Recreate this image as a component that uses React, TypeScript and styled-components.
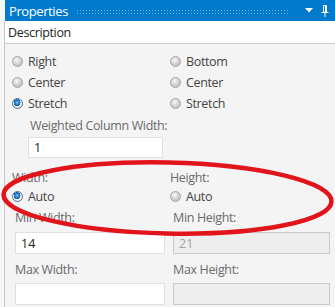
import styled, { createGlobalStyle } from "styled-components";

const GlobalStyle = createGlobalStyle`
    html, body {
        margin: 0;
        padding: 0;
        background: #f7f7f7;
    }
    body {
        font-family: "Open Sans", "Noto Sans", sans-serif;
        font-size: 12.5px;
    }
`;

const Frame = styled.div`
    position: relative;
    width: 335px;
    height: 307px;
    overflow: hidden;
    padding-left: 4px;
    box-sizing: border-box;
    background: #f7f7f7;
`;

const TitleBar = styled.div`
    height: 21px;
    margin-left: 1px;
    background: #007acc;
    display: flex;
    align-items: center;
    padding: 0 6px 0 4px;
    color: #ffffff;
`;

const Title = styled.span`
    font-size: 13px;
    letter-spacing: -0.4px;
`;

// dotted grip between title and the buttons
const Grip = styled.div`
    flex: 1;
    height: 5px;
    margin: 1px 8px 0 8px;
    background-image: radial-gradient(circle, rgba(255, 255, 255, 0.45) 0.6px, transparent 0.9px);
    background-size: 3px 3px;
`;

const TitleButton = styled.span`
    display: flex;
    align-items: center;
    margin-left: 8px;
`;

const Body = styled.div`
    border-left: 1px solid #c8c8c8;
    background: #f4f4f4;
    height: 286px;
`;

const DescriptionBar = styled.div`
    height: 22px;
    background: #ffffff;
    border-bottom: 1px solid #cccccc;
    display: flex;
    align-items: center;
    padding-left: 3px;
    color: #222;
    letter-spacing: -0.35px;
`;

const Content = styled.div`
    padding-top: 7px;
`;

const TwoColumns = styled.div<{ $top?: number }>`
    display: grid;
    grid-template-columns: 158px 1fr;
    padding: 0 5px 0 7px;
    margin-top: ${(p) => p.$top ?? 0}px;
`;

const Column = styled.div`
    display: flex;
    flex-direction: column;
`;

const RadioRow = styled.div`
    height: 21px;
    display: flex;
    align-items: center;
    gap: 5px;
    color: #444;
    letter-spacing: -0.35px;
`;

const Radio = styled.span<{ $checked?: boolean }>`
    width: 11px;
    height: 11px;
    border-radius: 50%;
    box-sizing: border-box;
    flex: none;
    border: 1px solid ${(p) => (p.$checked ? "#4d6f8f" : "#a4a4a4")};
    background: ${(p) =>
        p.$checked
            ? "radial-gradient(circle at 45% 40%, #8fd0ff 0, #2f8be0 1.6px, #1d5f9e 3.3px, #ffffff 3.6px, #e6e6e6 5px)"
            : "radial-gradient(circle at 40% 35%, #fafafa 0, #e4e4e4 2px, #c8c8c8 5px)"};
`;

const Label = styled.div<{ $indent?: number; $top?: number }>`
    height: 16px;
    line-height: 16px;
    color: #6a6a6a;
    letter-spacing: -0.35px;
    margin-left: ${(p) => p.$indent ?? 0}px;
    margin-top: ${(p) => p.$top ?? 0}px;
`;

const Field = styled.input<{ $indent?: number; $top?: number; $width?: number }>`
    box-sizing: border-box;
    height: 22px;
    width: ${(p) => (p.$width ? `${p.$width}px` : "auto")};
    margin: ${(p) => p.$top ?? 0}px 0 0 ${(p) => p.$indent ?? 0}px;
    padding: 0 5px;
    border: 1px solid #e0e0e0;
    background: #ffffff;
    font-family: "Open Sans", "Noto Sans", sans-serif;
    font-size: 12.5px;
    color: #222;
    outline: none;

    &:disabled {
        background: #eeeeee;
        border-color: #c9c9c9;
        color: #a0a0a0;
    }
`;

const Highlight = styled.svg`
    position: absolute;
    left: 0;
    top: 0;
    pointer-events: none;
`;

const alignLeft = ["Right", "Center", "Stretch"];
const alignRight = ["Bottom", "Center", "Stretch"];

function App() {
    return (
        <Frame>
            <GlobalStyle />
            <TitleBar>
                <Title>Properties</Title>
                <Grip />
                <TitleButton>
                    <svg width="8" height="5" viewBox="0 0 8 5">
                        <path d="M0 0 H8 L4 4.5 Z" fill="#ffffff" />
                    </svg>
                </TitleButton>
                <TitleButton>
                    <svg width="8" height="12" viewBox="0 0 8 12">
                        <path d="M2.5 0.5 H5.5 V7 H2.5 Z" fill="none" stroke="#ffffff" />
                        <path d="M4.5 1 V7" stroke="#ffffff" />
                        <path d="M0.5 7.5 H7.5" stroke="#ffffff" />
                        <path d="M4 8 V12" stroke="#ffffff" />
                    </svg>
                </TitleButton>
            </TitleBar>
            <Body>
                <DescriptionBar>Description</DescriptionBar>
                <Content>
                    <TwoColumns>
                        <Column>
                            {alignLeft.map((text) => (
                                <RadioRow key={text}>
                                    <Radio $checked={text === "Stretch"} />
                                    {text}
                                </RadioRow>
                            ))}
                            <Label $indent={18} $top={4}>
                                Weighted Column Width:
                            </Label>
                            <Field $indent={16} $top={3} $width={135} defaultValue="1" readOnly style={{ height: 21 }} />
                        </Column>
                        <Column>
                            {alignRight.map((text) => (
                                <RadioRow key={text}>
                                    <Radio />
                                    {text}
                                </RadioRow>
                            ))}
                        </Column>
                    </TwoColumns>
                    <TwoColumns $top={12}>
                        <Column>
                            <Label>Width:</Label>
                            <RadioRow>
                                <Radio $checked />
                                Auto
                            </RadioRow>
                            <Label $indent={3} $top={3}>
                                Min Width:
                            </Label>
                            <Field $indent={3} $top={6} $width={150} defaultValue="14" readOnly />
                            <Label $indent={3} $top={8}>
                                Max Width:
                            </Label>
                            <Field $indent={3} $top={5} $width={150} defaultValue="" readOnly />
                        </Column>
                        <Column>
                            <Label>Height:</Label>
                            <RadioRow>
                                <Radio />
                                Auto
                            </RadioRow>
                            <Label $indent={3} $top={3}>
                                Min Height:
                            </Label>
                            <Field $indent={3} $top={6} $width={157} defaultValue="21" disabled />
                            <Label $indent={3} $top={8}>
                                Max Height:
                            </Label>
                            <Field $indent={3} $top={5} $width={157} defaultValue="" disabled />
                        </Column>
                    </TwoColumns>
                </Content>
            </Body>
            {/* red marker drawn over the Width / Height section */}
            <Highlight width="335" height="307" viewBox="0 0 335 307">
                <ellipse
                    cx="167.5"
                    cy="198"
                    rx="164"
                    ry="35.5"
                    fill="none"
                    stroke="#e2141b"
                    strokeWidth="4.5"
                    transform="rotate(1.2 167.5 198)"
                />
            </Highlight>
        </Frame>
    );
}

export default App;
